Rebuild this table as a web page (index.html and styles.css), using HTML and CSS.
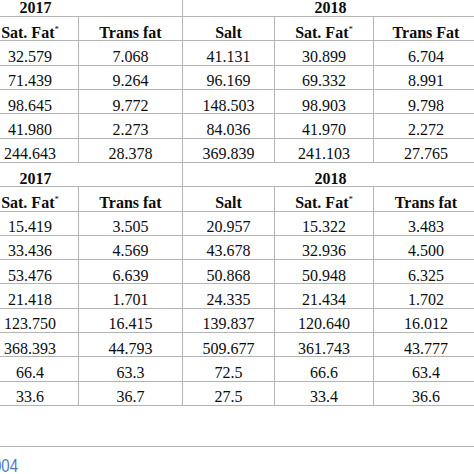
FILE: index.html
```html
<!DOCTYPE html>
<html lang="en">
<head>
<meta charset="utf-8">
<title>Table</title>
<link rel="stylesheet" href="styles.css">
</head>
<body>
<div class="page">
  <div class="table">
    <div class="c year y17"><span>2017</span></div>
    <div class="c year y18"><span>2018</span></div>
    <div class="c head"><span>Sat. Fat<sup>*</sup></span></div>
    <div class="c head"><span>Trans fat</span></div>
    <div class="c head"><span>Salt</span></div>
    <div class="c head"><span>Sat. Fat<sup>*</sup></span></div>
    <div class="c head"><span>Trans Fat</span></div>

    <div class="c"><span>32.579</span></div><div class="c"><span>7.068</span></div><div class="c"><span>41.131</span></div><div class="c"><span>30.899</span></div><div class="c"><span>6.704</span></div>
    <div class="c"><span>71.439</span></div><div class="c"><span>9.264</span></div><div class="c"><span>96.169</span></div><div class="c"><span>69.332</span></div><div class="c"><span>8.991</span></div>
    <div class="c"><span>98.645</span></div><div class="c"><span>9.772</span></div><div class="c"><span>148.503</span></div><div class="c"><span>98.903</span></div><div class="c"><span>9.798</span></div>
    <div class="c"><span>41.980</span></div><div class="c"><span>2.273</span></div><div class="c"><span>84.036</span></div><div class="c"><span>41.970</span></div><div class="c"><span>2.272</span></div>
    <div class="c"><span>244.643</span></div><div class="c"><span>28.378</span></div><div class="c"><span>369.839</span></div><div class="c"><span>241.103</span></div><div class="c"><span>27.765</span></div>

    <div class="c year y17"><span>2017</span></div>
    <div class="c year y18"><span>2018</span></div>
    <div class="c head"><span>Sat. Fat<sup>*</sup></span></div>
    <div class="c head"><span>Trans fat</span></div>
    <div class="c head"><span>Salt</span></div>
    <div class="c head"><span>Sat. Fat<sup>*</sup></span></div>
    <div class="c head"><span>Trans fat</span></div>

    <div class="c"><span>15.419</span></div><div class="c"><span>3.505</span></div><div class="c"><span>20.957</span></div><div class="c"><span>15.322</span></div><div class="c"><span>3.483</span></div>
    <div class="c"><span>33.436</span></div><div class="c"><span>4.569</span></div><div class="c"><span>43.678</span></div><div class="c"><span>32.936</span></div><div class="c"><span>4.500</span></div>
    <div class="c"><span>53.476</span></div><div class="c"><span>6.639</span></div><div class="c"><span>50.868</span></div><div class="c"><span>50.948</span></div><div class="c"><span>6.325</span></div>
    <div class="c"><span>21.418</span></div><div class="c"><span>1.701</span></div><div class="c"><span>24.335</span></div><div class="c"><span>21.434</span></div><div class="c"><span>1.702</span></div>
    <div class="c"><span>123.750</span></div><div class="c"><span>16.415</span></div><div class="c"><span>139.837</span></div><div class="c"><span>120.640</span></div><div class="c"><span>16.012</span></div>
    <div class="c"><span>368.393</span></div><div class="c"><span>44.793</span></div><div class="c"><span>509.677</span></div><div class="c"><span>361.743</span></div><div class="c"><span>43.777</span></div>
    <div class="c"><span>66.4</span></div><div class="c"><span>63.3</span></div><div class="c"><span>72.5</span></div><div class="c"><span>66.6</span></div><div class="c"><span>63.4</span></div>
    <div class="c"><span>33.6</span></div><div class="c"><span>36.7</span></div><div class="c"><span>27.5</span></div><div class="c"><span>33.4</span></div><div class="c"><span>36.6</span></div>
  </div>
  <div class="footer">
    <a class="doi">004</a>
  </div>
</div>
</body>
</html>
```

FILE: styles.css
```css
html, body {
  margin: 0;
  padding: 0;
  overflow: hidden;
  background: #ffffff;
}

.page {
  width: 474px;
  height: 474px;
  overflow: hidden;
}

.table {
  display: grid;
  width: max-content;
  grid-template-columns: 96px 103px 91px 98px 104px;
  grid-template-rows: repeat(17, 23.3125px);
  gap: 1px;
  padding-bottom: 1px;
  background: #b4b4b4;
  margin-left: -18px;
  margin-top: -7.3px;
  font-family: "Liberation Serif", "Times New Roman", serif;
  font-size: 16px;
  color: #0c0c0c;
}

.c {
  background: #ffffff;
  display: flex;
  align-items: center;
  justify-content: center;
  padding-top: 8px;
  box-sizing: border-box;
  white-space: nowrap;
}

.c span {
  display: inline-block;
  transform: scaleY(1.05);
}

.head, .year {
  font-weight: bold;
}

.c sup {
  font-size: 0.55em;
  font-weight: normal;
  vertical-align: 0.7em;
  line-height: 0;
}

.y17 {
  grid-column: span 2;
  padding-right: 93px;
}

.y18 {
  grid-column: span 3;
}

.footer {
  margin-top: 40px;
  border-top: 1px solid #b4b4b4;
  padding-top: 10px;
}

.doi {
  display: inline-block;
  margin-left: -7px;
  font-family: "Liberation Sans", Arial, sans-serif;
  font-size: 15px;
  color: #4a78c8;
  transform: scaleY(1.2);
}
```
